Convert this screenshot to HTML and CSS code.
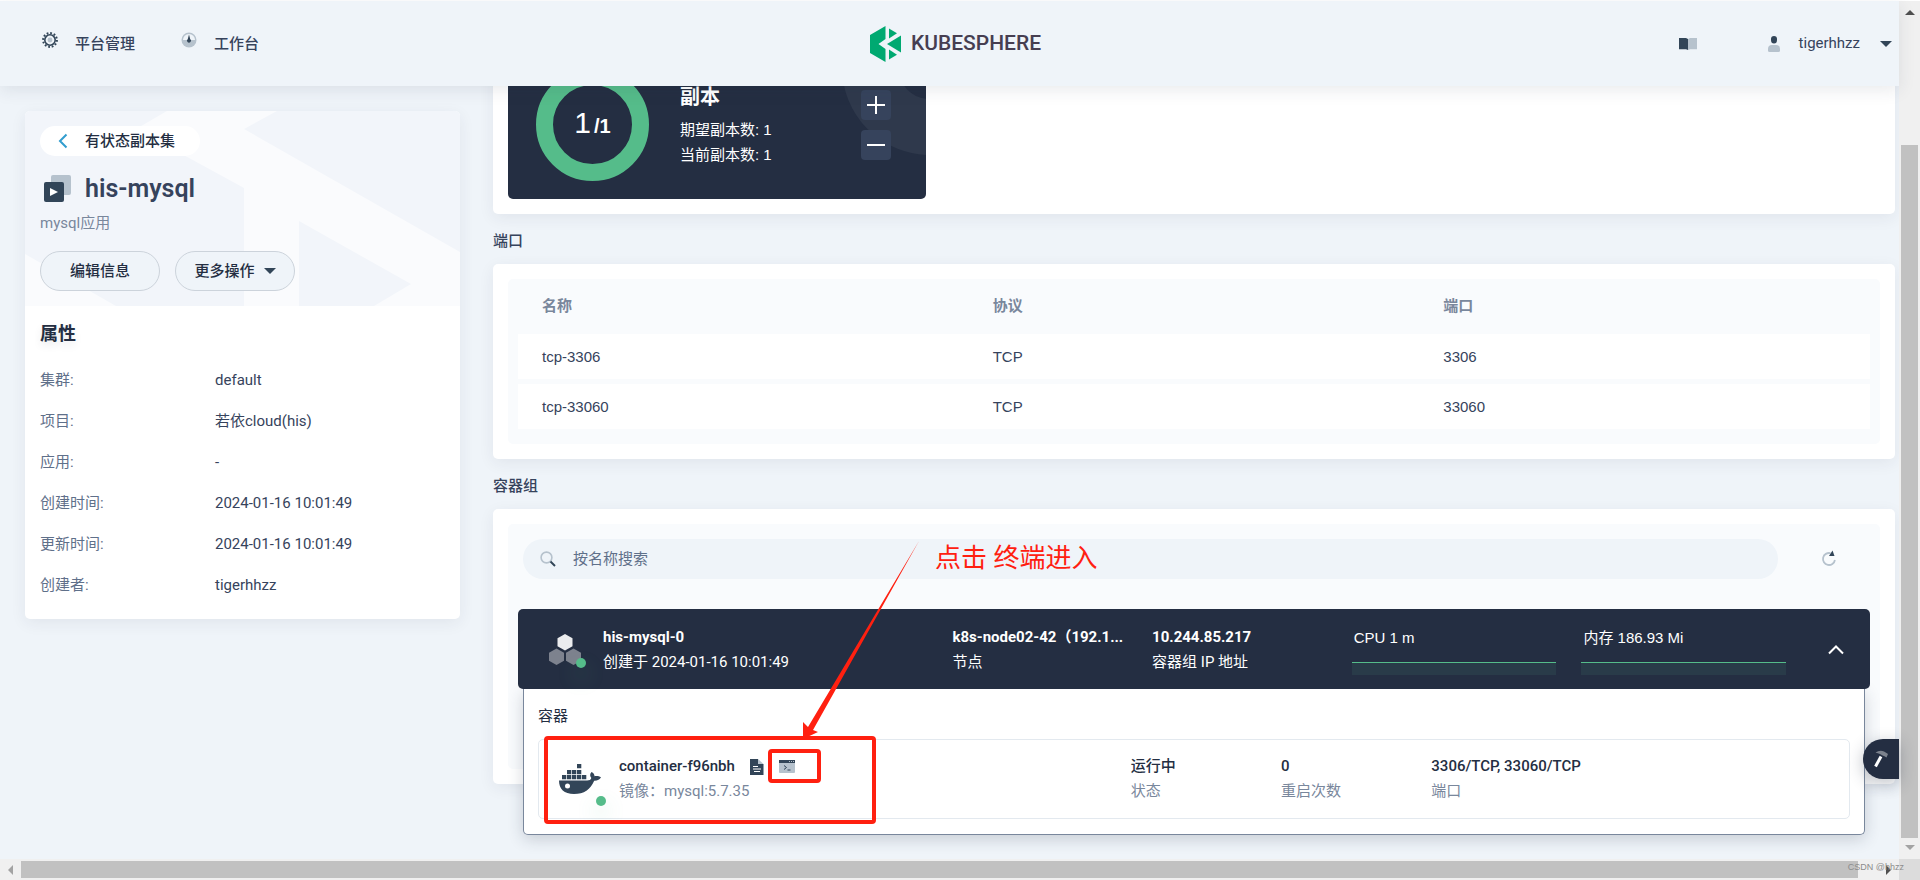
FILE: index.html
```html
<!DOCTYPE html>
<html lang="zh-CN">
<head>
  <meta charset="UTF-8">
  <meta name="viewport" content="width=device-width, initial-scale=1.0">
  <title>his-mysql - KubeSphere</title>
  <link rel="stylesheet" href="styles.css">
</head>
<body>
  <div class="app">
    <header class="header">
      <nav class="nav">
        <a href="#" class="nav-item">
          <svg width="20" height="20" viewBox="0 0 20 20">
            <circle cx="10" cy="10" r="6.9" fill="none" stroke="#324558" stroke-width="2" stroke-dasharray="1.8 1.81"/>
            <circle cx="10" cy="10" r="5.2" fill="none" stroke="#324558" stroke-width="1.6"/>
            <circle cx="10" cy="10" r="2.4" fill="#b6c2cd"/>
          </svg>
          <span>平台管理</span>
        </a>
        <a href="#" class="nav-item">
          <svg width="20" height="20" viewBox="0 0 20 20">
            <circle cx="10" cy="10" r="7.5" fill="#b6c2cd"/>
            <path d="M4 10a6 6 0 0 1 12 0z" fill="#eff4f9"/>
            <path d="M10 4.5l1.2 4.6a2 2 0 1 1-2.4 0z" fill="#324558"/>
          </svg>
          <span>工作台</span>
        </a>
      </nav>
      <a href="#" class="logo">
        <svg width="31" height="36" viewBox="0 0 31 36">
          <g fill="#00a971">
            <path d="M15.500 0v13l-7 5 7 5v13L0 27V9z"/>
            <path d="M19 2.500l8 4.700-8 5.200z"/>
            <path d="M31 9.500v17L17 18z"/>
            <path d="M19 23.600l8 5.200-8 4.700z"/>
          </g>
        </svg>
        <span>KUBESPHERE</span>
      </a>
      <div class="user-area">
        <button class="icon-btn" aria-label="文档">
          <svg width="20" height="20" viewBox="0 0 20 20">
            <path d="M1 4h7l2 1v11l-2-.8H1z" fill="#324558"/>
            <path d="M10 5l2-1h7v11.200h-7l-2 .8z" fill="#b6c2cd"/>
          </svg>
        </button>
        <button class="user-btn">
          <svg width="20" height="20" viewBox="0 0 20 20">
            <path d="M7 5q0-3 3-3t3 3v1q0 3.500-3 3.500T7 6z" fill="#324558"/>
            <path d="M4 15q0-4 4-4h4q4 0 4 4v1.500q0 1.500-1.500 1.500h-9Q4 18 4 16.500z" fill="#b6c2cd"/>
          </svg>
          <span>tigerhhzz</span>
          <svg width="12" height="6" viewBox="0 0 12 6"><path d="M0 0h12L6 6z" fill="#324558"/></svg>
        </button>
      </div>
    </header>

    <main class="main">
      <aside class="side">
        <div class="side-head">
          <svg class="side-bg" width="100%" height="100%" viewBox="0 0 435 195" preserveAspectRatio="xMinYMin slice">
            <path d="M142 0H252L219 18 435 141V195H349L386 173 274 110V195H219V77L111 18zM0 143L91 195H0z" fill="#fafbfd"/>
          </svg>
          <a href="#" class="back">
            <svg width="10" height="16" viewBox="0 0 10 16"><path d="M8.500 1.500L2 8l6.500 6.500" fill="none" stroke="#329dce" stroke-width="2"/></svg>
            有状态副本集
          </a>
          <h1>
            <svg width="27" height="27" viewBox="0 0 27 27">
              <rect x="7" width="20" height="20" rx="2" fill="#b6c2cd"/>
              <rect y="7" width="20" height="20" rx="2" fill="#324558"/>
              <path d="M6 13l8 4-8 4z" fill="#fff"/>
            </svg>
            his-mysql
          </h1>
          <p class="desc">mysql应用</p>
          <div class="actions">
            <button class="btn">编辑信息</button>
            <button class="btn">更多操作
              <svg width="12" height="6" viewBox="0 0 12 6"><path d="M0 0h12L6 6z" fill="#324558"/></svg>
            </button>
          </div>
        </div>
        <div class="attrs">
          <h2>属性</h2>
          <dl>
            <dt>集群:</dt><dd>default</dd>
            <dt>项目:</dt><dd>若依cloud(his)</dd>
            <dt>应用:</dt><dd>-</dd>
            <dt>创建时间:</dt><dd>2024-01-16 10:01:49</dd>
            <dt>更新时间:</dt><dd>2024-01-16 10:01:49</dd>
            <dt>创建者:</dt><dd>tigerhhzz</dd>
          </dl>
        </div>
      </aside>

      <div class="content">
        <section class="card">
          <div class="replica">
            <svg class="replica-bg" width="100" height="149" viewBox="0 0 100 149">
              <circle cx="104" cy="17" r="60" fill="none" stroke="#2f394c" stroke-width="56"/>
            </svg>
            <div class="ring"><span class="ring-now">1</span><span class="ring-all">/1</span></div>
            <div class="replica-text">
              <h3>副本</h3>
              <p>期望副本数: 1</p>
              <p>当前副本数: 1</p>
            </div>
            <div class="replica-btns">
              <button aria-label="增加">
                <svg width="18" height="18" viewBox="0 0 18 18"><path d="M0 9h18M9 0v18" stroke="#fff" stroke-width="2"/></svg>
              </button>
              <button aria-label="减少">
                <svg width="18" height="18" viewBox="0 0 18 18"><path d="M0 9h18" stroke="#fff" stroke-width="2"/></svg>
              </button>
            </div>
          </div>
        </section>

        <h2 class="title">端口</h2>
        <section class="card">
          <div class="panel ports">
            <table>
              <thead>
                <tr><th>名称</th><th>协议</th><th>端口</th></tr>
              </thead>
              <tbody>
                <tr><td>tcp-3306</td><td>TCP</td><td>3306</td></tr>
                <tr><td>tcp-33060</td><td>TCP</td><td>33060</td></tr>
              </tbody>
            </table>
          </div>
        </section>

        <h2 class="title">容器组</h2>
        <section class="card">
          <div class="panel pods">
            <div class="toolbar">
              <label class="search">
                <svg width="16" height="16" viewBox="0 0 16 16">
                  <circle cx="6.500" cy="6.500" r="5.400" fill="none" stroke="#b6c2cd" stroke-width="1.600"/>
                  <path d="M10.500 10.500l4.500 4.500" stroke="#324558" stroke-width="2"/>
                </svg>
                <input type="text" placeholder="按名称搜索" aria-label="按名称搜索">
              </label>
              <button class="icon-btn refresh" aria-label="刷新">
                <svg width="20" height="20" viewBox="0 0 20 20">
                  <path d="M11.500 4.200A6 6 0 1 0 15.900 11" fill="none" stroke="#b6c2cd" stroke-width="1.800"/>
                  <path d="M13.500 1.500L15.500 7H10z" fill="#324558"/>
                </svg>
              </button>
            </div>

            <div class="pod">
              <div class="pod-row">
                <div class="pod-icon">
                  <svg width="34" height="34" viewBox="0 0 34 34">
                    <path d="M17 1l7.500 4.200v8L17 17.500l-7.500-4.300v-8z" fill="#ebecee"/>
                    <path d="M8.500 15.500l7.500 4.200v8L8.500 32 1 27.700v-8zM25.500 15.500l7.500 4.200v8L25.500 32 18 27.700v-8z" fill="#7d828e"/>
                  </svg>
                  <i class="dot"></i>
                </div>
                <div class="item">
                  <strong>his-mysql-0</strong>
                  <p>创建于 2024-01-16 10:01:49</p>
                </div>
                <div class="item">
                  <strong>k8s-node02-42（192.1...</strong>
                  <p>节点</p>
                </div>
                <div class="item">
                  <strong>10.244.85.217</strong>
                  <p>容器组 IP 地址</p>
                </div>
                <div class="meter"><p>CPU 1 m</p><div class="chart"></div></div>
                <div class="meter"><p>内存 186.93 Mi</p><div class="chart"></div></div>
                <button class="icon-btn" aria-label="收起">
                  <svg width="16" height="10" viewBox="0 0 16 10"><path d="M1 8.500l7-7 7 7" fill="none" stroke="#fff" stroke-width="2"/></svg>
                </button>
              </div>

              <div class="pod-detail">
                <h3>容器</h3>
                <div class="container-row">
                  <div class="docker-icon">
                    <svg width="42" height="30" viewBox="0 0 42 30">
                      <g fill="#324558">
                        <path d="M0 16.500h28c2.500 0 4-.8 4.300-2.500-1.500-2-1.600-4 .2-6 2 1 3 2.500 3 4.300 2-.5 4.500-.3 6.500 1-1.200 2.300-3.600 3.500-6.800 3.400C31.500 25.500 25 30 15 30 5 30 0 25 0 16.500z"/>
                        <path d="M3 11h4.300v4.300H3zM8 11h4.300v4.300H8zM13 11h4.300v4.300H13zM18 11h4.300v4.300H18zM23 11h4.300v4.300H23zM8 6h4.300v4.300H8zM13 6h4.300v4.300H13zM18 6h4.300v4.300H18zM18 0h4.300v4.300H18z"/>
                      </g>
                      <circle cx="8.500" cy="22" r="2.500" fill="#fff"/>
                    </svg>
                    <i class="dot"></i>
                  </div>
                  <div class="item">
                    <div class="name">
                      <strong>container-f96nbh</strong>
                      <button class="icon-btn" aria-label="容器日志">
                        <svg width="14" height="16" viewBox="0 0 14 16">
                          <path d="M0 0h8v5h5.500v11H0z" fill="#324558"/>
                          <path d="M8 0l5.500 5H8z" fill="#b6c2cd"/>
                          <path d="M3 7.500h5M3 10h8M4 12.500h6" stroke="#fff" stroke-width="1"/>
                        </svg>
                      </button>
                      <button class="icon-btn" aria-label="终端">
                        <svg width="16" height="13" viewBox="0 0 16 13">
                          <rect width="16" height="13" rx="1" fill="#b6c2cd"/>
                          <path d="M0 0h16v3H0z" fill="#324558"/>
                          <path d="M10 1.500h1M12 1.500h1M14 1.500h1" stroke="#b6c2cd"/>
                          <path d="M5 5.500l2.500 2L5 9.500M8.500 10h3" fill="none" stroke="#324558"/>
                        </svg>
                      </button>
                    </div>
                    <p>镜像：mysql:5.7.35</p>
                  </div>
                  <div class="item"><strong>运行中</strong><p>状态</p></div>
                  <div class="item"><strong>0</strong><p>重启次数</p></div>
                  <div class="item"><strong>3306/TCP, 33060/TCP</strong><p>端口</p></div>
                </div>
              </div>
            </div>
          </div>
        </section>
      </div>
    </main>

    <div class="scroll-y">
      <svg width="10" height="5" viewBox="0 0 10 5"><path d="M0 5l5-5 5 5z" fill="#505050"/></svg>
      <div class="thumb"></div>
      <svg width="10" height="5" viewBox="0 0 10 5"><path d="M0 0h10L5 5z" fill="#a3a3a3"/></svg>
    </div>
    <div class="scroll-x">
      <svg width="5" height="10" viewBox="0 0 5 10"><path d="M5 0v10L0 5z" fill="#a3a3a3"/></svg>
      <div class="thumb"></div>
      <svg width="5" height="10" viewBox="0 0 5 10"><path d="M0 0v10l5-5z" fill="#505050"/></svg>
    </div>
    <div class="corner"></div>

    <button class="toolbox" aria-label="工具箱">
      <svg width="16" height="18" viewBox="0 0 16 18">
        <path d="M8 6.500L2.500 16.500" stroke="#fff" stroke-width="3"/>
        <path d="M2.500 2.500Q7-.5 11 1.500l2.500 1.500 1.500 1-1.500 3.500-2.500-1.500-1-.3-3-1.700z" fill="#7c828d"/>
      </svg>
    </button>

    <!-- hand-drawn notes on top of the page -->
    <svg class="note-arrow" width="118" height="200" viewBox="0 0 118 200">
      <path d="M117 1L6 187l-5-5v17l15-7-5-2z" fill="#ff2010"/>
    </svg>
    <div class="note-text">点击 终端进入</div>
    <div class="note-box note-box-row"></div>
    <div class="note-box note-box-icon"></div>
    <div class="watermark">CSDN @hhzz</div>
  </div>
</body>
</html>
```
FILE: styles.css
```css
* {
  box-sizing: border-box;
}
body, h1, h2, h3, p, dl, dd {
  margin: 0;
}
body {
  font-family: Roboto, "Noto Sans CJK SC", sans-serif;
  font-size: 15px;
  line-height: 25px;
  color: #242e42;
  background: #fff;
}
svg {
  display: block;
  flex: none;
}
a {
  color: inherit;
  text-decoration: none;
}
button {
  font: inherit;
  color: inherit;
  padding: 0;
  border: none;
  background: none;
  cursor: pointer;
}
strong {
  font-weight: 500;
}
.app {
  position: relative;
  display: grid;
  grid-template-columns: minmax(0, 1fr) 21px;
  grid-template-rows: minmax(0, 1fr) 21px;
  height: 100vh;
  padding-top: 1px;
  overflow: hidden;
}

/* header */
.header {
  grid-area: 1 / 1;
  z-index: 2;
  align-self: start;
  display: grid;
  grid-template-columns: 1fr auto 1fr;
  align-items: center;
  height: 85px;
  padding: 0 4px 0 16px;
  background: #eff4f9;
  box-shadow: 0 4px 16px rgba(36, 46, 66, 0.1);
  color: #36435c;
}
.nav {
  display: flex;
  gap: 44px;
  padding-left: 24px;
  font-weight: 500;
}
.nav-item {
  display: flex;
  gap: 15px;
}
.nav-item span {
  padding-top: 2px;
}
.logo {
  display: flex;
  align-items: center;
  gap: 10px;
  color: #463e51;
  font-size: 21px;
  font-weight: 500;
}
.user-area {
  display: flex;
  justify-content: flex-end;
  align-items: center;
  gap: 66px;
  padding-right: 3px;
}
.user-btn {
  display: flex;
  align-items: center;
  gap: 15px;
}
.user-btn span {
  margin-right: 5px;
}
.icon-btn {
  display: grid;
  place-items: center;
}

/* page */
.main {
  grid-area: 1 / 1;
  display: flex;
  align-items: flex-start;
  gap: 33px;
  padding: 34px 4px 0 25px;
  background: #eff4f9;
  overflow: hidden;
}
.side {
  flex: 0 0 435px;
  margin-top: 76px;
  background: #fff;
  border-radius: 5px;
  box-shadow: 0 4px 16px rgba(36, 46, 66, 0.07);
  overflow: hidden;
}
.side-head {
  position: relative;
  height: 195px;
  padding: 15px;
  background: #f2f5fa;
}
.side-head > * {
  position: relative;
}
.side-head > .side-bg {
  position: absolute;
  inset: 0;
}
.back {
  display: flex;
  align-items: center;
  gap: 17px;
  width: 160px;
  height: 30px;
  padding-left: 18px;
  border-radius: 15px;
  background: #fff;
  font-weight: 500;
}
h1 {
  display: flex;
  align-items: center;
  gap: 14px;
  margin-top: 15px;
  padding-left: 4px;
  font-size: 25px;
  line-height: 35px;
  font-weight: 600;
  color: #36435c;
}
.desc {
  margin-top: 5px;
  color: #79879c;
}
.actions {
  display: flex;
  gap: 15px;
  margin-top: 15px;
}
.btn {
  display: flex;
  align-items: center;
  justify-content: center;
  gap: 9px;
  width: 120px;
  height: 40px;
  border: 1px solid #ccd3db;
  border-radius: 20px;
  background: #eff4f9;
  font-weight: 500;
}
.attrs {
  padding: 15px 15px 21px;
}
.attrs h2 {
  font-size: 18px;
  font-weight: 700;
  text-shadow: 0 4px 8px rgba(36, 46, 66, 0.1);
}
dl {
  display: grid;
  grid-template-columns: 175px 1fr;
  row-gap: 16px;
  margin-top: 22px;
}
dt {
  color: #5f708a;
}
dd {
  color: #36435c;
}

.content {
  flex: 1;
  min-width: 0;
}
.title {
  margin: 15px 0 10px;
  font-size: 15px;
  font-weight: 500;
  color: #36435c;
}
.card {
  padding: 15px;
  background: #fff;
  border-radius: 5px;
  box-shadow: 0 4px 16px rgba(36, 46, 66, 0.07);
}
.panel {
  background: #f9fbfd;
  border-radius: 5px;
}

/* replicas */
.replica {
  position: relative;
  display: flex;
  align-items: center;
  gap: 31px;
  width: 418px;
  height: 149px;
  padding: 0 35px 0 28px;
  border-radius: 5px;
  background: #242e42;
  color: #fff;
}
.replica-bg {
  position: absolute;
  top: 0;
  right: 0;
}
.ring {
  display: flex;
  justify-content: center;
  align-items: baseline;
  gap: 3px;
  width: 113px;
  height: 113px;
  border: 17px solid #55bc8a;
  border-radius: 50%;
  font-family: "Liberation Sans", sans-serif;
  line-height: 76px;
}
.ring-now {
  font-size: 30px;
}
.ring-all {
  font-size: 20px;
  font-weight: 700;
}
.replica-text {
  font-family: "Liberation Sans", "Noto Sans CJK SC", sans-serif;
}
.replica-text h3 {
  margin-bottom: 5px;
  font-size: 20px;
  line-height: 30px;
}
.replica-btns {
  position: relative;
  display: grid;
  gap: 10px;
  margin-left: auto;
}
.replica-btns button {
  display: grid;
  place-items: center;
  width: 30px;
  height: 30px;
  border-radius: 4px;
  background: #36435c;
}

/* ports */
.ports {
  padding: 0 10px 10px;
}
table {
  width: 100%;
  table-layout: fixed;
  border-collapse: separate;
  border-spacing: 0 5px;
}
th, td {
  height: 45px;
  padding: 0 24px;
  text-align: left;
}
th {
  font-weight: 700;
  color: #79879c;
}
td {
  background: #fff;
  color: #36435c;
  font-family: "Liberation Sans", sans-serif;
}

/* pods */
.pods {
  padding: 15px 10px 80px;
}
.toolbar {
  display: flex;
  align-items: center;
  padding: 0 5px;
}
.search {
  flex: 1;
  display: flex;
  align-items: center;
  gap: 17px;
  height: 40px;
  padding: 0 17px;
  border-radius: 20px;
  background: #eff4f9;
}
.search input {
  flex: 1;
  padding: 0;
  border: none;
  outline: none;
  background: none;
  font: inherit;
}
.search input::placeholder {
  color: #5f708a;
}
.refresh {
  width: 40px;
  margin: 0 16px 0 31px;
}
.pod {
  position: relative;
  margin-top: 30px;
}
.pod-row {
  position: relative;
  z-index: 1;
  display: grid;
  grid-template-columns: 55px 35fr 20fr 20fr 23fr 23fr 50px;
  align-items: center;
  height: 80px;
  padding: 2px 9px 0 30px;
  border-radius: 5px;
  background: #242e42;
  color: #fff;
}
.pod-row strong {
  font-weight: 700;
}
.item {
  min-width: 0;
  white-space: nowrap;
}
.item strong {
  display: block;
}
.pod-icon, .docker-icon {
  position: relative;
}
.dot {
  position: absolute;
  width: 10px;
  height: 10px;
  border-radius: 50%;
  background: #55bc8a;
  box-shadow: 0 10px 20px rgba(85, 188, 138, 0.3);
}
.pod-icon .dot {
  left: 28px;
  bottom: -1px;
}
.docker-icon .dot {
  left: 37px;
  bottom: -12px;
}
.meter {
  padding-right: 25px;
  font-family: "Liberation Sans", "Noto Sans CJK SC", sans-serif;
}
.meter p {
  padding-left: 2px;
}
.chart {
  height: 13px;
  margin-top: 12px;
  border-top: 1px solid #55bc8a;
  background: #293b49;
}
.pod-detail {
  position: absolute;
  top: 100%;
  left: 5px;
  right: 5px;
  padding: 15px 14px;
  border: 1px solid #79879c;
  border-top: none;
  border-radius: 0 0 5px 5px;
  background: #fff;
  box-shadow: 0 4px 16px rgba(36, 46, 66, 0.2);
}
.pod-detail h3 {
  margin-bottom: 10px;
  font-size: 15px;
  font-weight: 400;
}
.container-row {
  display: grid;
  grid-template-columns: 60px 511fr 150fr 150fr 397fr;
  align-items: center;
  height: 80px;
  padding: 0 20px;
  border: 1px solid #e3e9ef;
  border-radius: 5px;
}
.container-row p {
  color: #79879c;
}
.name {
  display: flex;
  align-items: center;
  gap: 15px;
}

/* scrollbars */
.scroll-y, .scroll-x {
  display: flex;
  align-items: center;
  background: #f0f0f0;
}
.scroll-y {
  grid-area: 1 / 2;
  flex-direction: column;
  padding: 9px 2px;
}
.scroll-x {
  grid-area: 2 / 1;
  padding: 2px 8px;
}
.thumb {
  flex: 1;
  background: #c1c1c1;
}
.scroll-y .thumb {
  width: 17px;
  margin: 130px 0 7px;
}
.scroll-x .thumb {
  height: 17px;
  margin: 0 28px 0 8px;
}
.corner {
  grid-area: 2 / 2;
  background: #dcdcdc;
}

/* floating parts */
.toolbox {
  position: absolute;
  right: 21px;
  bottom: 101px;
  z-index: 3;
  display: grid;
  place-items: center;
  width: 36px;
  height: 40px;
  border-radius: 20px 0 0 20px;
  background: #242e42;
  box-shadow: 0 4px 16px rgba(36, 46, 66, 0.3);
}
.note-arrow, .note-text, .note-box {
  position: absolute;
  z-index: 4;
}
.note-arrow {
  left: 802px;
  top: 540px;
}
.note-text {
  left: 935px;
  top: 540px;
  font-size: 26px;
  line-height: 36px;
  color: #ff2010;
}
.note-box {
  border: 4px solid #ff2010;
  border-radius: 4px;
}
.note-box-row {
  left: 544px;
  top: 736px;
  width: 332px;
  height: 88px;
}
.note-box-icon {
  left: 768px;
  top: 749px;
  width: 53px;
  height: 34px;
}
.watermark {
  position: absolute;
  right: 16px;
  bottom: 5px;
  z-index: 4;
  font-family: "Liberation Sans", sans-serif;
  font-size: 9px;
  line-height: 16px;
  color: #8c8c8c;
}
```
